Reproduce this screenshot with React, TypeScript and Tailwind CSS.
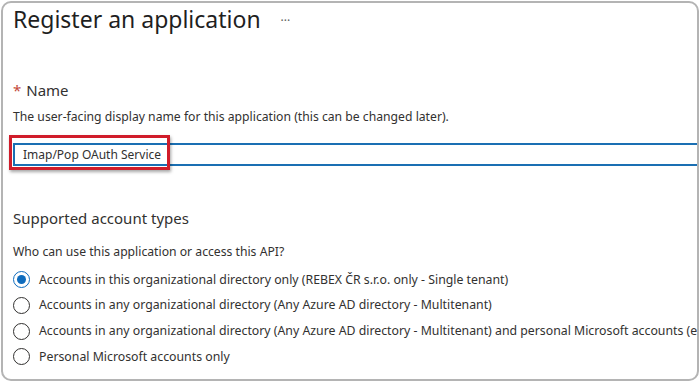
import { useState } from 'react'

const options = [
  'Accounts in this organizational directory only (REBEX ČR s.r.o. only - Single tenant)',
  'Accounts in any organizational directory (Any Azure AD directory - Multitenant)',
  'Accounts in any organizational directory (Any Azure AD directory - Multitenant) and personal Microsoft accounts (e.g. Skype, Xbox)',
  'Personal Microsoft accounts only',
]

function Radio({ checked }: { checked: boolean }) {
  return (
    <span
      className={`flex h-[17px] w-[17px] shrink-0 items-center justify-center rounded-full border ${
        checked ? 'border-[#0f6cbd]' : 'border-[#323130]'
      }`}
    >
      {checked && <span className="h-[9px] w-[9px] rounded-full bg-[#0f6cbd]" />}
    </span>
  )
}

export default function App() {
  const [selected, setSelected] = useState(0)
  const [name, setName] = useState('Imap/Pop OAuth Service')

  return (
    <div className="h-[382px] w-[700px] bg-white p-px font-['Segoe_UI','Noto_Sans',sans-serif] text-[#323130]">
      <div className="relative h-full w-full overflow-hidden rounded-[10px] border-2 border-[#b4b4b4] pl-[10px]">
        <div className="flex h-[32px] items-center gap-[20px]">
          <span className="text-[23px] leading-[32px] text-[#1f1f1f]">Register an application</span>
          <span className="pt-1 text-[12px] text-[#605e5c]">···</span>
        </div>

        <div className="mt-[45px] text-[15px] leading-[20px]">
          <span className="mr-[5px] text-[#c4493b]">*</span>
          Name
        </div>
        <div className="mt-[9px] text-[12.2px] leading-[16px]">
          The user-facing display name for this application (this can be changed later).
        </div>

        <div className="relative mt-[16px]">
          <input
            value={name}
            onChange={(e) => setName(e.target.value)}
            className="h-[23px] w-[720px] border-2 border-[#1a6fb3] pl-[8px] text-[12px] text-[#323130] outline-none"
          />
          <div className="pointer-events-none absolute left-[-4px] top-[-6px] h-[35px] w-[161px] border-[3px] border-[#d01c2a] shadow-[1px_2px_3px_rgba(0,0,0,0.35)]" />
        </div>

        <div className="mt-[42px] text-[15px] leading-[20px]">Supported account types</div>
        <div className="mt-[16px] text-[12.2px] leading-[16px]">
          Who can use this application or access this API?
        </div>

        <div className="mt-[7px] flex flex-col">
          {options.map((o, i) => (
            <label
              key={o}
              onClick={() => setSelected(i)}
              className="flex h-[25.7px] cursor-pointer items-center gap-[9px] whitespace-nowrap text-[12.3px]"
            >
              <Radio checked={selected === i} />
              <span>{o}</span>
            </label>
          ))}
        </div>
      </div>
    </div>
  )
}
